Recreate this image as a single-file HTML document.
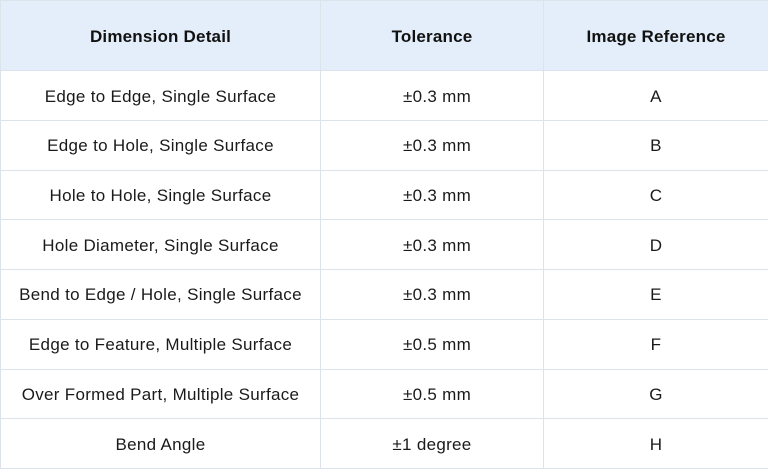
<!DOCTYPE html>
<html><head><style>
body{margin:0;background:#fff;font-family:"Liberation Sans",Arial,sans-serif;}
table{position:absolute;left:0;top:0;width:768px;height:469px;border-collapse:collapse;table-layout:fixed;}
td,th{border:1px solid #dde3ea;text-align:center;font-size:17px;color:#1a1a1a;padding:2px 0 0 0;letter-spacing:0.3px;}
th{background:#e4eefb;height:67px;font-weight:bold;color:#111;letter-spacing:0.2px;}
td{height:46.5px;}
</style></head><body>
<table>
<colgroup><col style="width:320px"><col style="width:223px"><col style="width:225px"></colgroup>
<tr><th>Dimension Detail</th><th>Tolerance</th><th>Image Reference</th></tr>
<tr><td>Edge to Edge, Single Surface</td><td>&nbsp;&nbsp;±0.3 mm</td><td>A</td></tr>
<tr><td>Edge to Hole, Single Surface</td><td>&nbsp;&nbsp;±0.3 mm</td><td>B</td></tr>
<tr><td>Hole to Hole, Single Surface</td><td>&nbsp;&nbsp;±0.3 mm</td><td>C</td></tr>
<tr><td>Hole Diameter, Single Surface</td><td>&nbsp;&nbsp;±0.3 mm</td><td>D</td></tr>
<tr><td>Bend to Edge / Hole, Single Surface</td><td>&nbsp;&nbsp;±0.3 mm</td><td>E</td></tr>
<tr><td>Edge to Feature, Multiple Surface</td><td>&nbsp;&nbsp;±0.5 mm</td><td>F</td></tr>
<tr><td>Over Formed Part, Multiple Surface</td><td>&nbsp;&nbsp;±0.5 mm</td><td>G</td></tr>
<tr><td>Bend Angle</td><td>±1 degree</td><td>H</td></tr>
</table>
</body></html>
